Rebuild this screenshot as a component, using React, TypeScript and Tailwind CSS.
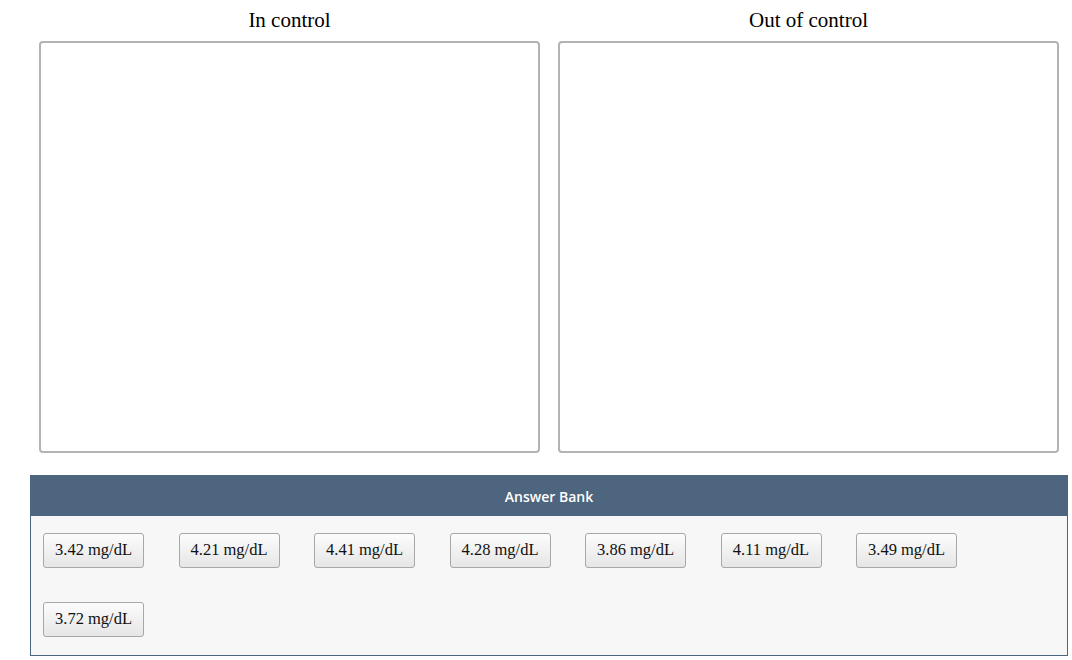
import React from "react";

const answers = [
  "3.42 mg/dL",
  "4.21 mg/dL",
  "4.41 mg/dL",
  "4.28 mg/dL",
  "3.86 mg/dL",
  "4.11 mg/dL",
  "3.49 mg/dL",
  "3.72 mg/dL",
];

function DropZone({ title }: { title: string }) {
  return (
    <div className="flex w-[501px] flex-col">
      <div
        className="flex h-[41px] items-start justify-center pt-[6px] text-[21px] leading-[28px] text-black"
        style={{ fontFamily: '"Liberation Serif", "Times New Roman", serif' }}
      >
        {title}
      </div>
      <div className="h-[412px] rounded-[4px] border-2 border-[#b3b3b3] bg-white" />
    </div>
  );
}

function Chip({ label }: { label: string }) {
  return (
    <div
      className="flex h-[35px] w-[101px] items-center justify-center rounded-[3px] border border-[#a8a8a8] bg-gradient-to-b from-[#fcfcfc] to-[#e6e6e6] text-[16.5px] text-[#111]"
      style={{ fontFamily: '"Liberation Serif", "Times New Roman", serif' }}
    >
      {label}
    </div>
  );
}

export default function App() {
  return (
    <div className="h-[660px] w-[1072px] bg-white">
      <div className="flex gap-[18px] pl-[39px]">
        <DropZone title="In control" />
        <DropZone title="Out of control" />
      </div>
      <div className="ml-[30px] mt-[22px] w-[1038px] border border-[#4e6580]">
        <div
          className="flex h-[40px] items-center justify-center bg-[#4e6580] text-[14px] font-semibold text-white"
          style={{ fontFamily: '"Open Sans", "Noto Sans", sans-serif' }}
        >
          Answer Bank
        </div>
        <div className="flex flex-wrap gap-x-[34.5px] gap-y-[34px] bg-[#f7f7f7] pb-[18px] pl-[12px] pr-[12px] pt-[17px]">
          {answers.map((a) => (
            <Chip key={a} label={a} />
          ))}
        </div>
      </div>
    </div>
  );
}
